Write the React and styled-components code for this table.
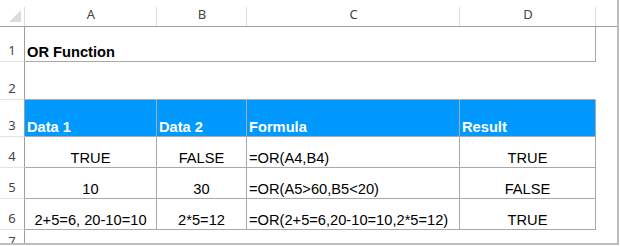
import React from "react";
import styled, { createGlobalStyle } from "styled-components";

const Global = createGlobalStyle`
  html, body { margin: 0; padding: 0; background: #ffffff; }
  body { font-family: "Liberation Sans", Arial, sans-serif; }
`;

const LINE = "#a9a9a9";
const HEAD_LINE = "#9e9e9e";
const LIGHT = "#dedede";
const BLUE = "#0099ff";

const Frame = styled.div`
  width: 620px;
  height: 246px;
  box-sizing: border-box;
  padding: 0 1px 1px 0;
  background: #fff;
`;

const Sheet = styled.div`
  width: 619px;
  height: 245px;
  box-sizing: border-box;
  border-right: 2px solid #bdbdbd;
  border-bottom: 2px solid #bdbdbd;
  overflow: hidden;
`;

const Grid = styled.div`
  display: grid;
  grid-template-columns: 25px 132px 90px 213px 136px 21px;
  grid-template-rows: 27px 35px 38px 37px 31px 31px 31px 23px;
`;

const Corner = styled.div`
  box-sizing: border-box;
  position: relative;
  border-bottom: 1px solid ${HEAD_LINE};
  background-image: linear-gradient(to bottom, transparent 7px, ${LIGHT} 7px);
  background-size: 1px 100%;
  background-position: right top;
  background-repeat: no-repeat;
  display: flex;
  align-items: flex-end;
  justify-content: flex-end;
  padding: 0 3px 3px 0;
`;

const ColHead = styled.div`
  box-sizing: border-box;
  border-bottom: 1px solid ${HEAD_LINE};
  background-image: ${(p) =>
    p.$sep ? `linear-gradient(to bottom, transparent 7px, ${LIGHT} 7px)` : "none"};
  background-size: 1px 100%;
  background-position: right top;
  background-repeat: no-repeat;
  display: flex;
  align-items: flex-end;
  justify-content: center;
  padding-bottom: 3px;
  font-family: "Noto Sans", "Open Sans", sans-serif;
  font-size: 13px;
  line-height: 17px;
  color: #444;
`;

const RowHead = styled.div`
  box-sizing: border-box;
  border-right: 1px solid ${HEAD_LINE};
  border-bottom: 1px solid #e2e2e2;
  display: flex;
  align-items: flex-end;
  justify-content: center;
  padding-bottom: 2px;
  font-family: "Noto Sans", "Open Sans", sans-serif;
  font-size: 13px;
  line-height: 17px;
  color: #444;
`;

const Cell = styled.div`
  box-sizing: border-box;
  grid-column: ${(p) => (p.$span ? `span ${p.$span}` : "auto")};
  border-right: 1px solid ${(p) => (p.$r ? LINE : "transparent")};
  border-bottom: 1px solid ${(p) => (p.$b ? LINE : "transparent")};
  background: ${(p) => (p.$head ? BLUE : "transparent")};
  color: ${(p) => (p.$head ? "#ffffff" : "#000000")};
  font-weight: ${(p) => (p.$bold || p.$head ? 700 : 400)};
  font-family: "Liberation Sans", Arial, sans-serif;
  font-size: 14.67px;
  line-height: 17px;
  display: flex;
  align-items: flex-end;
  justify-content: ${(p) => (p.$center ? "center" : "flex-start")};
  padding: 0 2px 0 2px;
  white-space: nowrap;
  overflow: hidden;
`;

const Tri = () => (
  <svg width="13" height="13" viewBox="0 0 13 13">
    <polygon points="12,0 12,12 0,12" fill="#dcdcdc" />
  </svg>
);

const headers = ["Data 1", "Data 2", "Formula", "Result"];
const rows = [
  ["4", "TRUE", "FALSE", "=OR(A4,B4)", "TRUE"],
  ["5", "10", "30", "=OR(A5>60,B5<20)", "FALSE"],
  ["6", "2+5=6, 20-10=10", "2*5=12", "=OR(2+5=6,20-10=10,2*5=12)", "TRUE"],
];

export default function App() {
  return (
    <>
      <Global />
      <Frame>
        <Sheet>
          <Grid>
            <Corner>
              <Tri />
            </Corner>
            {["A", "B", "C", "D"].map((l) => (
              <ColHead key={l} $sep>
                {l}
              </ColHead>
            ))}
            <ColHead />

            <RowHead>1</RowHead>
            <Cell $span={4} $r $b $bold>
              OR Function
            </Cell>
            <Cell />

            <RowHead>2</RowHead>
            <Cell $b />
            <Cell $b />
            <Cell $b />
            <Cell $b />
            <Cell />

            <RowHead>3</RowHead>
            {headers.map((h) => (
              <Cell key={h} $head $r $b>
                {h}
              </Cell>
            ))}
            <Cell />

            {rows.map(([n, a, b, c, d]) => (
              <React.Fragment key={n}>
                <RowHead>{n}</RowHead>
                <Cell $r $b $center>
                  {a}
                </Cell>
                <Cell $r $b $center>
                  {b}
                </Cell>
                <Cell $r $b>
                  {c}
                </Cell>
                <Cell $r $b $center>
                  {d}
                </Cell>
                <Cell />
              </React.Fragment>
            ))}

            <RowHead>7</RowHead>
            <Cell />
            <Cell />
            <Cell />
            <Cell />
            <Cell />
          </Grid>
        </Sheet>
      </Frame>
    </>
  );
}
